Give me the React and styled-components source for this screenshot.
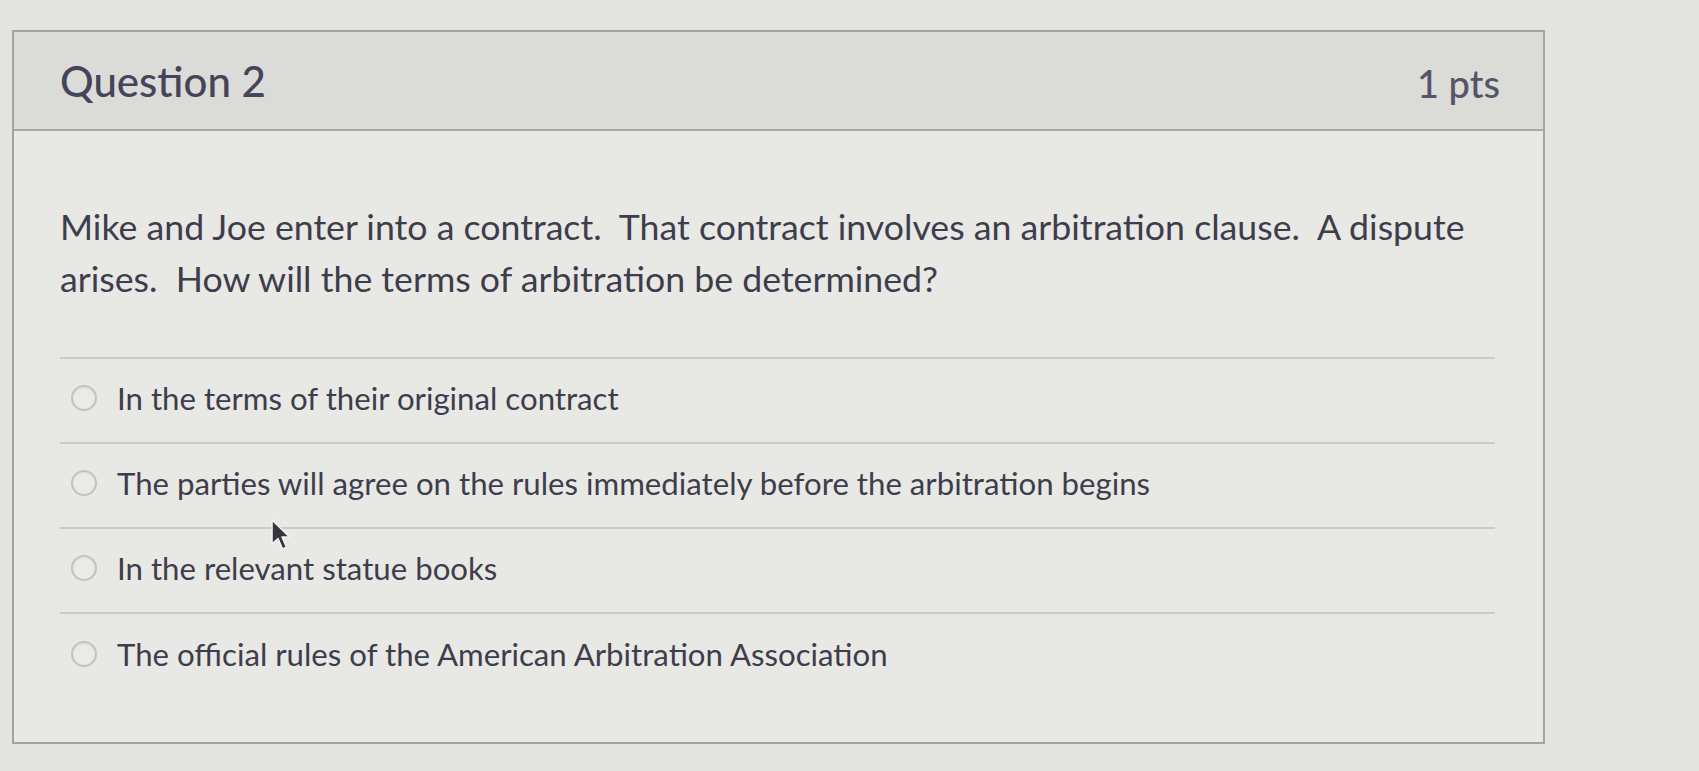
import React from "react";
import styled, { createGlobalStyle } from "styled-components";

const Global = createGlobalStyle`
  html, body { margin: 0; padding: 0; }
  body {
    background: #e3e3df;
    font-family: Lato, "Noto Sans", "Liberation Sans", sans-serif;
    color: #3f3f4d;
  }
`;

const Page = styled.div`
  width: 1699px;
  height: 771px;
  padding: 30px 0 0 12px;
  box-sizing: border-box;
  position: relative;
  overflow: hidden;
`;

const Card = styled.section`
  width: 1533px;
  height: 714px;
  box-sizing: border-box;
  border: 2px solid #a3a3a3;
  background: #e8e8e5;
  display: flex;
  flex-direction: column;
`;

const Header = styled.header`
  height: 99px;
  flex: none;
  box-sizing: border-box;
  background: #dbdbd8;
  border-bottom: 2px solid #a8a8a8;
  display: flex;
  align-items: center;
  justify-content: space-between;
  padding: 0 43px 0 46px;
`;

const Title = styled.h2`
  margin: 0;
  font-size: 42px;
  font-weight: 500;
  color: #44445a;
  letter-spacing: 0;
`;

const Points = styled.span`
  font-size: 38px;
  font-weight: 500;
  color: #55556a;
  margin-top: 4px;
`;

const Body = styled.div`
  padding: 70px 48px 0 46px;
`;

const Prompt = styled.p`
  margin: 0 0 52px;
  font-size: 35.7px;
  line-height: 52px;
  color: #3d3d4c;
`;

const Answers = styled.div`
  border-top: 2px solid #cacac8;
`;

const Answer = styled.label`
  display: flex;
  align-items: center;
  gap: 20px;
  height: 85px;
  box-sizing: border-box;
  padding: 0 0 6px 11px;
  border-bottom: ${(p) => (p.$last ? "none" : "2px solid #cacac8")};
`;

const Radio = styled.span`
  width: 26px;
  height: 26px;
  flex: none;
  border-radius: 50%;
  box-sizing: border-box;
  border: 2px solid #c2c2c0;
  background: #eaeae7;
  box-shadow: inset 0 1px 2px rgba(0, 0, 0, 0.06);
`;

const AnswerText = styled.span`
  font-size: 31.2px;
  line-height: 44px;
  color: #3d3d4c;
`;

const Cursor = styled.svg`
  position: absolute;
  left: 270px;
  top: 518px;
  width: 22px;
  height: 34px;
`;

const answers = [
  "In the terms of their original contract",
  "The parties will agree on the rules immediately before the arbitration begins",
  "In the relevant statue books",
  "The official rules of the American Arbitration Association",
];

export default function App() {
  return (
    <Page>
      <Global />
      <Card>
        <Header>
          <Title>Question 2</Title>
          <Points>1 pts</Points>
        </Header>
        <Body>
          <Prompt>
            Mike and Joe enter into a contract.&nbsp; That contract involves an
            arbitration clause.&nbsp; A dispute arises.&nbsp; How will the terms
            of arbitration be determined?
          </Prompt>
          <Answers>
            {answers.map((a, i) => (
              <Answer key={a} $last={i === answers.length - 1}>
                <Radio />
                <AnswerText>{a}</AnswerText>
              </Answer>
            ))}
          </Answers>
        </Body>
      </Card>
      <Cursor viewBox="0 0 22 34">
        <path
          d="M2 2 L2 26 L8 20.5 L12.5 31 L16.5 29.2 L12 19 L19.5 19 Z"
          fill="#35353d"
          stroke="#f2f2f0"
          strokeWidth="1.6"
          strokeLinejoin="round"
        />
      </Cursor>
    </Page>
  );
}
